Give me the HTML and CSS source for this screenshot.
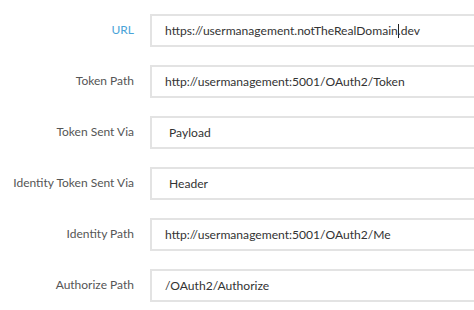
FILE: index.html
```html
<!DOCTYPE html>
<html>
<head>
<meta charset="utf-8">
<link rel="stylesheet" href="styles.css">
</head>
<body>
<form class="form">
  <div class="row">
    <label class="label label-active">URL</label>
    <div class="field">https://usermanagement.notTheRealDomain<span class="caret"></span>.dev</div>
  </div>
  <div class="row">
    <label class="label">Token Path</label>
    <div class="field">http://usermanagement:5001/OAuth2/Token</div>
  </div>
  <div class="row">
    <label class="label">Token Sent Via</label>
    <div class="field field-select">Payload</div>
  </div>
  <div class="row">
    <label class="label">Identity Token Sent Via</label>
    <div class="field field-select">Header</div>
  </div>
  <div class="row">
    <label class="label">Identity Path</label>
    <div class="field">http://usermanagement:5001/OAuth2/Me</div>
  </div>
  <div class="row">
    <label class="label">Authorize Path</label>
    <div class="field">/OAuth2/Authorize</div>
  </div>
</form>
</body>
</html>
```
FILE: styles.css
```css
html, body {
  margin: 0;
  padding: 0;
  background: #ffffff;
  overflow: hidden;
}
body {
  font-family: "Lato", "Open Sans", sans-serif;
  width: 474px;
  height: 310px;
}
.form {
  display: flex;
  flex-direction: column;
  gap: 18px;
  padding-top: 14px;
  width: 520px;
}
.row {
  display: flex;
  align-items: center;
  gap: 16px;
}
.label {
  width: 134px;
  flex: none;
  text-align: right;
  font-size: 12px;
  color: #555555;
  margin-top: -3px;
}
.label-active {
  color: #4aa3d8;
}
.field {
  flex: 1;
  box-sizing: border-box;
  height: 33px;
  border: 2px solid #e3e3e3;
  padding: 0 0 0 13px;
  display: flex;
  align-items: center;
  font-size: 12.1px;
  color: #333333;
  white-space: nowrap;
}
.field-select {
  padding-left: 17px;
}
.caret {
  display: inline-block;
  width: 1px;
  height: 14px;
  background: #222222;
  margin: 0 -1px 0 0;
}
```
